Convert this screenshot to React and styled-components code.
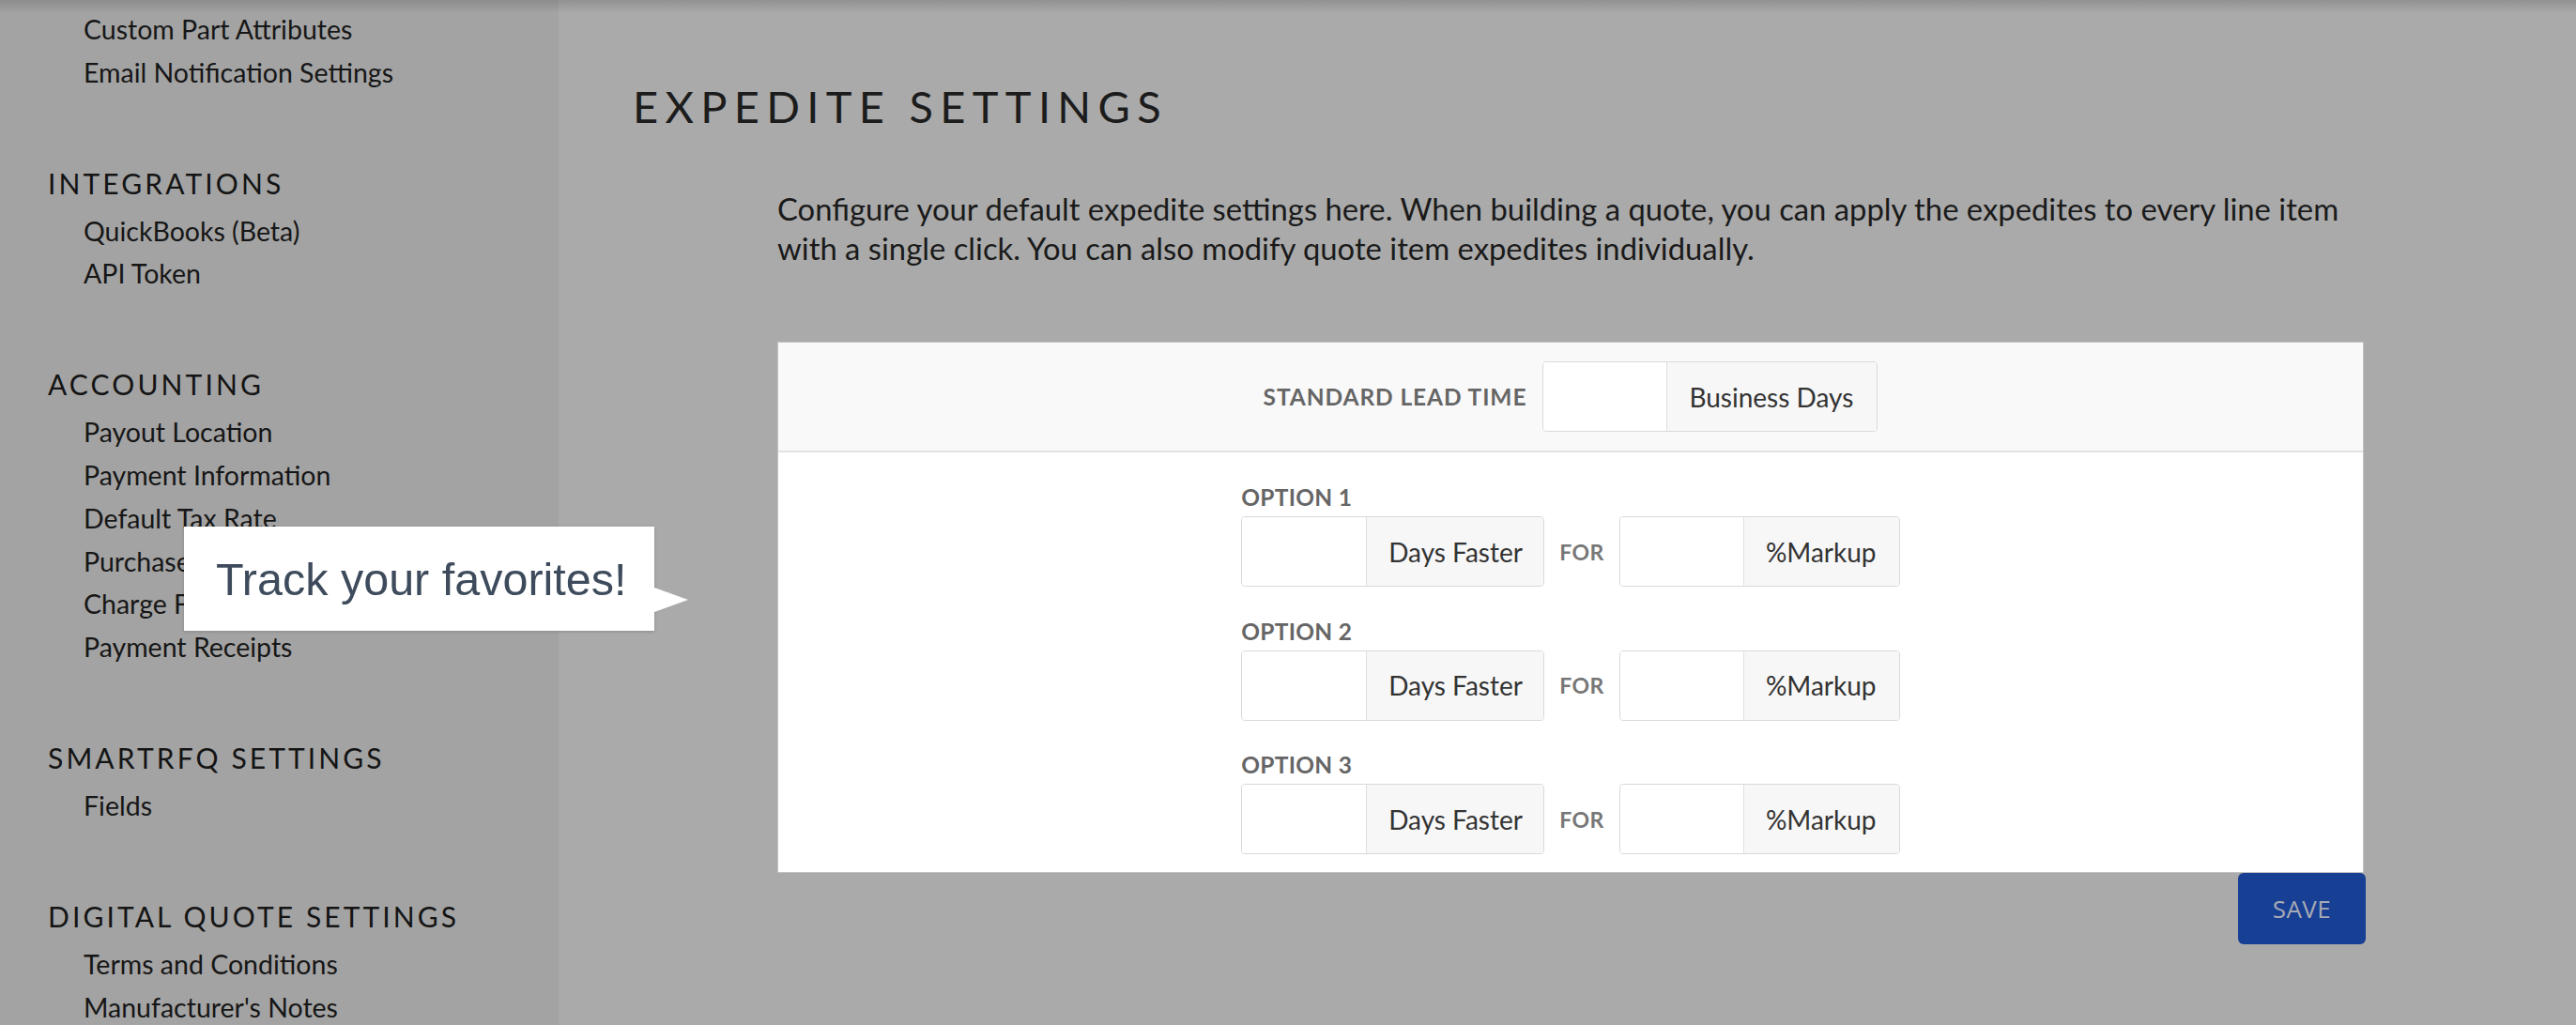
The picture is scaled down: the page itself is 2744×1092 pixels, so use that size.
import React from "react";
import styled, { createGlobalStyle } from "styled-components";

const Global = createGlobalStyle`
  html, body { margin: 0; padding: 0; background: #aaaaaa; }
  body { font-family: Lato, "Open Sans", sans-serif; }
  * { box-sizing: border-box; }
`;

const Page = styled.div`
  position: relative;
  display: flex;
  width: 2744px;
  height: 1092px;
  overflow: hidden;
  background: #aaaaaa;
  &::before {
    content: "";
    position: absolute;
    left: 0;
    right: 0;
    top: 0;
    height: 14px;
    background: linear-gradient(to bottom, rgba(0,0,0,0.14), rgba(0,0,0,0));
    pointer-events: none;
    z-index: 5;
  }
`;

const Sidebar = styled.nav`
  position: relative;
  flex: 0 0 595px;
  background: #a3a3a3;
  padding: 9px 0 0 51px;
  overflow: hidden;
`;

const Group = styled.div`
  margin-top: ${(p) => (p.$first ? 0 : 72)}px;
`;

const GroupTitle = styled.div`
  font-family: Lato, sans-serif;
  font-size: 30px;
  line-height: 45px;
  letter-spacing: 3.1px;
  color: #141414;
  margin-bottom: 6px;
`;

const NavItem = styled.div`
  font-family: Lato, sans-serif;
  font-size: 28.5px;
  line-height: 45.8px;
  color: #161616;
  padding-left: 38px;
  white-space: nowrap;
`;

const Main = styled.main`
  flex: 1;
  padding: 86px 0 0 79px;
`;

const Title = styled.h1`
  margin: 0;
  font-family: Lato, sans-serif;
  font-weight: 400;
  font-size: 47px;
  line-height: 55px;
  letter-spacing: 7.3px;
  color: #1c1c1c;
`;

const Content = styled.section`
  width: 1690px;
  margin: 61px 0 0 154px;
  display: flex;
  flex-direction: column;
`;

const Description = styled.p`
  margin: 0 0 78px;
  font-family: Lato, sans-serif;
  font-size: 32.8px;
  line-height: 42px;
  color: #1a1a1a;
`;

const Panel = styled.div`
  background: #ffffff;
  border: 1px solid #c2c2c2;
`;

const PanelHeader = styled.div`
  height: 117px;
  background: #f9f9f9;
  border-bottom: 2px solid #e2e2e2;
  display: flex;
  align-items: center;
  justify-content: center;
  gap: 17px;
`;

const FieldLabel = styled.span`
  font-family: Lato, sans-serif;
  font-weight: 700;
  font-size: 24.5px;
  letter-spacing: 0.9px;
  color: #666666;
  text-transform: uppercase;
`;

const OptionList = styled.div`
  display: flex;
  flex-direction: column;
  align-items: center;
  gap: 32.5px;
  padding: 33px 0 19px;
`;

const OptionBlock = styled.div`
  display: flex;
  flex-direction: column;
  gap: 6px;
`;

const OptionLabel = styled(FieldLabel)`
  line-height: 29px;
  letter-spacing: 0.3px;
`;

const OptionRow = styled.div`
  display: flex;
  align-items: center;
  gap: 16px;
`;

const InputGroup = styled.div`
  display: flex;
  height: 75px;
  border: 1px solid #d9d9d9;
  border-radius: 4px;
  overflow: hidden;
  background: #ffffff;
`;

const TextInput = styled.input`
  width: ${(p) => p.$w || 132}px;
  border: none;
  outline: none;
  background: #ffffff;
  font-family: Lato, sans-serif;
  font-size: 28px;
  padding: 0 16px;
`;

const Addon = styled.span`
  display: flex;
  align-items: center;
  width: ${(p) => p.$w}px;
  padding: 0 0 0 ${(p) => p.$pl || 22}px;
  background: #f7f7f7;
  border-left: 1px solid #e0e0e0;
  font-family: Lato, sans-serif;
  font-size: 28px;
  color: #333333;
  white-space: nowrap;
`;

const ForText = styled.span`
  font-family: Lato, sans-serif;
  font-weight: 700;
  font-size: 23px;
  letter-spacing: 0.5px;
  color: #777777;
`;

const Actions = styled.div`
  display: flex;
  justify-content: flex-end;
  margin-right: -2px;
`;

const SaveButton = styled.button`
  width: 136px;
  height: 76px;
  border: none;
  border-radius: 6px;
  background: #173f94;
  color: #a8aab4;
  font-family: "Open Sans", "Noto Sans", sans-serif;
  font-size: 26px;
  letter-spacing: 0.5px;
  cursor: pointer;
`;

const Tooltip = styled.div`
  position: absolute;
  left: 196px;
  top: 561px;
  width: 501px;
  height: 111px;
  background: #ffffff;
  box-shadow: 0 1px 3px rgba(0, 0, 0, 0.18);
  display: flex;
  align-items: center;
  padding: 0 0 0 34px;
  font-family: "Liberation Sans", Arial, sans-serif;
  font-size: 48.5px;
  color: #3e4b5c;
  white-space: nowrap;
  z-index: 10;
  &::after {
    content: "";
    position: absolute;
    right: -36px;
    top: 65px;
    width: 0;
    height: 0;
    border-left: 36px solid #ffffff;
    border-top: 13.5px solid transparent;
    border-bottom: 13.5px solid transparent;
  }
`;

const nav = [
  { items: ["Custom Part Attributes", "Email Notification Settings"] },
  { title: "INTEGRATIONS", items: ["QuickBooks (Beta)", "API Token"] },
  {
    title: "ACCOUNTING",
    items: [
      "Payout Location",
      "Payment Information",
      "Default Tax Rate",
      "Purchase Orders",
      "Charge Fees",
      "Payment Receipts",
    ],
  },
  { title: "SMARTRFQ SETTINGS", items: ["Fields"] },
  {
    title: "DIGITAL QUOTE SETTINGS",
    items: ["Terms and Conditions", "Manufacturer's Notes"],
  },
];

export default function App() {
  return (
    <Page>
      <Global />
      <Sidebar>
        {nav.map((g, i) => (
          <Group key={i} $first={i === 0}>
            {g.title && <GroupTitle>{g.title}</GroupTitle>}
            {g.items.map((it) => (
              <NavItem key={it}>{it}</NavItem>
            ))}
          </Group>
        ))}
      </Sidebar>
      <Main>
        <Title>EXPEDITE SETTINGS</Title>
        <Content>
          <Description>
            Configure your default expedite settings here. When building a quote, you can apply the
            expedites to every line item with a single click. You can also modify quote item
            expedites individually.
          </Description>
          <Panel>
            <PanelHeader>
              <FieldLabel>Standard Lead Time</FieldLabel>
              <InputGroup>
                <TextInput $w={131} />
                <Addon $w={224} $pl={23}>Business Days</Addon>
              </InputGroup>
            </PanelHeader>
            <OptionList>
              {[1, 2, 3].map((n) => (
                <OptionBlock key={n}>
                  <OptionLabel>Option {n}</OptionLabel>
                  <OptionRow>
                    <InputGroup>
                      <TextInput $w={132} />
                      <Addon $w={189} $pl={23}>Days Faster</Addon>
                    </InputGroup>
                    <ForText>FOR</ForText>
                    <InputGroup>
                      <TextInput $w={131} />
                      <Addon $w={166} $pl={23}>%Markup</Addon>
                    </InputGroup>
                  </OptionRow>
                </OptionBlock>
              ))}
            </OptionList>
          </Panel>
          <Actions>
            <SaveButton>SAVE</SaveButton>
          </Actions>
        </Content>
      </Main>
      <Tooltip>Track your favorites!</Tooltip>
    </Page>
  );
}
